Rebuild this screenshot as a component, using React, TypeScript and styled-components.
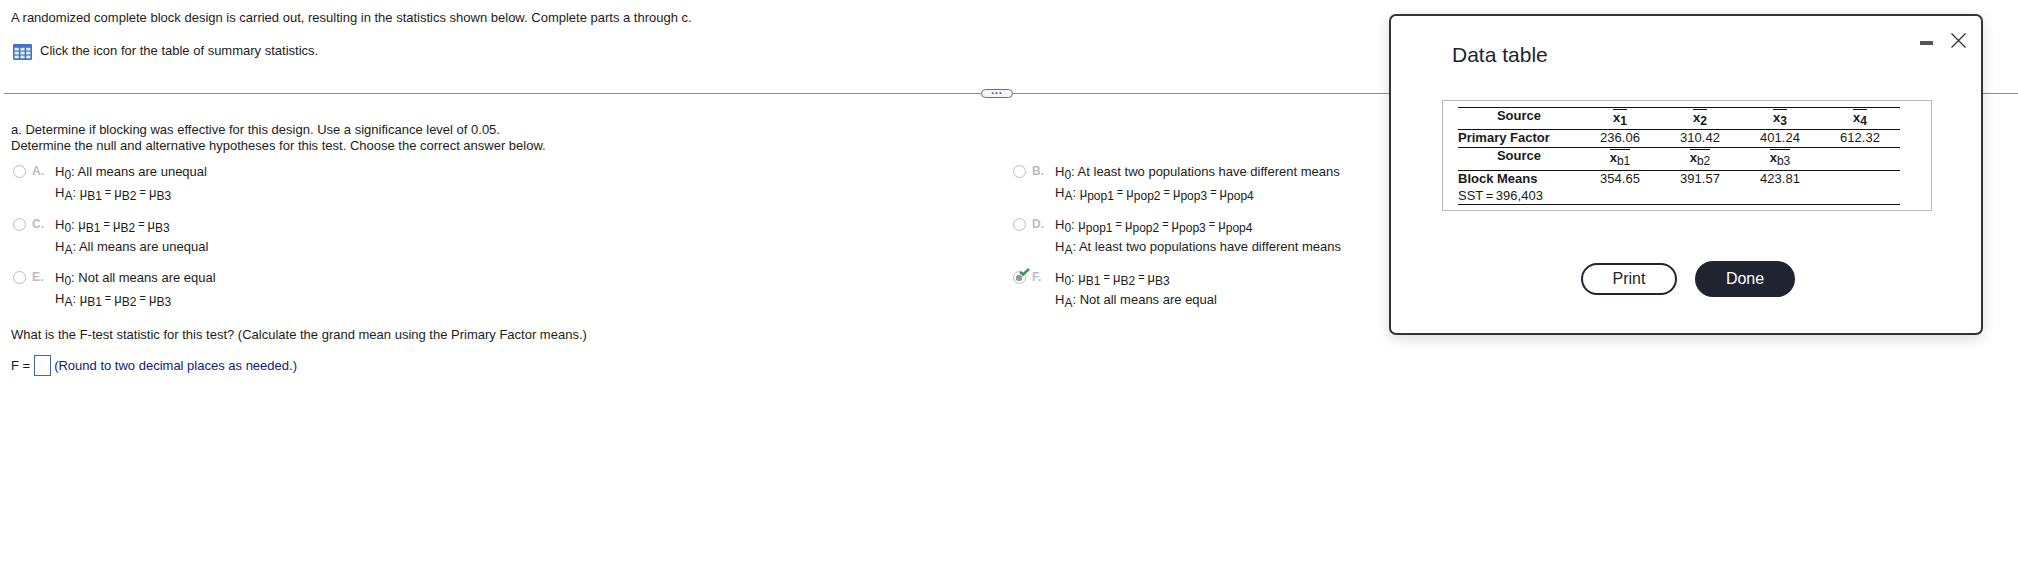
import styled, { createGlobalStyle } from "styled-components";

const GlobalStyle = createGlobalStyle`
  html, body {
    margin: 0;
    background: #fff;
  }
  body {
    font-family: "Liberation Sans", Arial, sans-serif;
    font-size: 13px;
    color: #1c1c1c;
  }
`;

const mu = "\u03BC";

function Mean({ sub }: { sub: string }) {
  return (
    <span>
      {mu}
      <Sub>{sub}</Sub>
    </span>
  );
}

function Means({ names }: { names: string[] }) {
  return (
    <>
      {names.map((name, i) => (
        <span key={name}>
          {i > 0 && <Eq>=</Eq>}
          <Mean sub={name} />
        </span>
      ))}
    </>
  );
}

const blocks = ["B1", "B2", "B3"];
const pops = ["pop1", "pop2", "pop3", "pop4"];

type OptionProps = {
  letter: string;
  h0: React.ReactNode;
  ha: React.ReactNode;
  picked?: boolean;
};

function Option({ letter, h0, ha, picked }: OptionProps) {
  return (
    <OptionRow>
      <Radio $picked={picked}>
        {picked && (
          <Check viewBox="0 0 11 8">
            <path d="M1 4 L4 6.5 L10 1" />
          </Check>
        )}
      </Radio>
      <Letter>{letter}.</Letter>
      <Lines>
        <Line>
          H<Sub>0</Sub>: {h0}
        </Line>
        <Line>
          H<Sub>A</Sub>: {ha}
        </Line>
      </Lines>
    </OptionRow>
  );
}

export default function App() {
  return (
    <>
      <GlobalStyle />
      <Page>
        <Header>
          <p>A randomized complete block design is carried out, resulting in the statistics shown below. Complete parts a through c.</p>
          <IconRow>
            <GridIcon viewBox="0 0 18 15">
              <rect width="18" height="15" rx="1" fill="#3f74c4" />
              {[1.5, 7, 12.5].flatMap((x) =>
                [3.5, 7.2, 10.9].map((y) => (
                  <rect key={`${x}-${y}`} x={x} y={y} width="4" height="2.6" fill="#dfeafa" />
                ))
              )}
            </GridIcon>
            Click the icon for the table of summary statistics.
          </IconRow>
        </Header>

        <Divider>
          <Pill>
            <PillDots>...</PillDots>
          </Pill>
        </Divider>

        <Body>
          <Intro>
            a. Determine if blocking was effective for this design. Use a significance level of 0.05.
            <br />
            Determine the null and alternative hypotheses for this test. Choose the correct answer below.
          </Intro>

          <Options>
            <Option letter="A" h0="All means are unequal" ha={<Means names={blocks} />} />
            <Option letter="B" h0="At least two populations have different means" ha={<Means names={pops} />} />
            <Option letter="C" h0={<Means names={blocks} />} ha="All means are unequal" />
            <Option letter="D" h0={<Means names={pops} />} ha="At least two populations have different means" />
            <Option letter="E" h0="Not all means are equal" ha={<Means names={blocks} />} />
            <Option letter="F" picked h0={<Means names={blocks} />} ha="Not all means are equal" />
          </Options>

          <Question>What is the F-test statistic for this test? (Calculate the grand mean using the Primary Factor means.)</Question>

          <AnswerRow>
            F =<AnswerBox />
            <Hint>(Round to two decimal places as needed.)</Hint>
          </AnswerRow>
        </Body>

        <Dialog>
          <WindowControls>
            <Minimize />
            <CloseIcon viewBox="0 0 15 15">
              <path d="M0.5 0.5 L14.5 14.5 M14.5 0.5 L0.5 14.5" />
            </CloseIcon>
          </WindowControls>
          <Title>Data table</Title>
          <TableFrame>
            <StatsTable>
              <colgroup>
                <col width="122" />
                <col width="80" />
                <col width="80" />
                <col width="80" />
                <col width="80" />
              </colgroup>
              <tbody>
                <Row $h={22}>
                  <HeadCell>Source</HeadCell>
                  {["1", "2", "3", "4"].map((n) => (
                    <SymbolCell key={n}>
                      <Bar>
                        <b>x</b>
                        <BoldSub>{n}</BoldSub>
                      </Bar>
                    </SymbolCell>
                  ))}
                </Row>
                <Row $h={18}>
                  <NameCell>Primary Factor</NameCell>
                  <ValueCell>236.06</ValueCell>
                  <ValueCell>310.42</ValueCell>
                  <ValueCell>401.24</ValueCell>
                  <ValueCell>612.32</ValueCell>
                </Row>
                <Row $h={23}>
                  <HeadCell>Source</HeadCell>
                  {["b1", "b2", "b3"].map((n) => (
                    <SymbolCell key={n}>
                      <Bar>
                        <b>x</b>
                        <Sub>{n}</Sub>
                      </Bar>
                    </SymbolCell>
                  ))}
                  <Cell />
                </Row>
                <Row $h={18} $plain>
                  <BlockCell>Block Means</BlockCell>
                  <BlockValue>354.65</BlockValue>
                  <BlockValue>391.57</BlockValue>
                  <BlockValue>423.81</BlockValue>
                  <Cell />
                </Row>
                <Row $h={16}>
                  <PlainCell colSpan={5}>SST = 396,403</PlainCell>
                </Row>
              </tbody>
            </StatsTable>
          </TableFrame>
          <Buttons>
            <PrintButton>Print</PrintButton>
            <DoneButton>Done</DoneButton>
          </Buttons>
        </Dialog>
      </Page>
    </>
  );
}

const Page = styled.div`
  position: relative;
  width: 2018px;
  height: 573px;
  overflow: hidden;
`;

const Header = styled.header`
  height: 93px;
  padding: 10px 0 0 11px;
  box-sizing: border-box;

  p {
    margin: 0;
    line-height: 16px;
  }
`;

const IconRow = styled.div`
  display: flex;
  align-items: center;
  gap: 8px;
  margin: 15px 0 0 2px;
  line-height: 16px;
`;

const GridIcon = styled.svg`
  width: 19px;
  height: 16px;
  margin-top: 3px;
`;

const Divider = styled.div`
  position: relative;
  height: 1px;
  margin-left: 4px;
  background: #8a8c92;
`;

const Pill = styled.div`
  position: absolute;
  left: 977px;
  top: -4px;
  width: 30px;
  height: 7px;
  border: 1px solid #6e7076;
  border-radius: 5px;
  background: #f4f5f7;
  display: flex;
  justify-content: center;
`;

const PillDots = styled.span`
  font-size: 10px;
  font-weight: 700;
  line-height: 1px;
  letter-spacing: 1px;
  color: #444;
`;

const Body = styled.main`
  padding: 28px 0 0 11px;
`;

const Intro = styled.p`
  margin: 0;
  line-height: 16px;
`;

const Options = styled.div`
  display: grid;
  grid-template-columns: 1000px 1fr;
  grid-auto-rows: 53px;
  margin-top: 10px;
`;

const OptionRow = styled.div`
  display: flex;
  align-items: flex-start;
  padding-left: 2px;
`;

const Radio = styled.span<{ $picked?: boolean }>`
  position: relative;
  flex: none;
  box-sizing: border-box;
  width: 13px;
  height: 13px;
  margin-top: 1px;
  border: 1px solid #bdbdbd;
  border-radius: 50%;
  background: ${(p) => (p.$picked ? "radial-gradient(circle at 45% 55%, #9a9a9a 0 3px, #fff 3.5px)" : "#fff")};
`;

const Check = styled.svg`
  position: absolute;
  left: 5px;
  top: -4px;
  width: 11px;
  height: 8px;
  fill: none;
  stroke: #3c9a4c;
  stroke-width: 2.6;
`;

const Letter = styled.span`
  flex: none;
  width: 23px;
  margin-left: 6px;
  font-size: 12px;
  font-weight: 700;
  line-height: 15px;
  color: #bcbcbc;
`;

const Lines = styled.div`
  display: flex;
  flex-direction: column;
  gap: 6px;
`;

const Line = styled.div`
  line-height: 15px;
  white-space: nowrap;
`;

const Sub = styled.sub`
  font-size: 12px;
  line-height: 0;
  vertical-align: -3px;
`;

const Eq = styled.span`
  margin: 0 3px;
  font-size: 11px;
  position: relative;
  top: -1px;
`;

const Question = styled.p`
  margin: 4px 0 0;
  line-height: 16px;
`;

const AnswerRow = styled.div`
  display: flex;
  align-items: center;
  margin-top: 12px;
`;

const AnswerBox = styled.span`
  width: 15px;
  height: 19px;
  margin: 0 3px 0 4px;
  border: 1px solid #3d68a8;
`;

const Hint = styled.span`
  color: #10207a;
`;

const Dialog = styled.aside`
  position: absolute;
  left: 1389px;
  top: 14px;
  width: 594px;
  height: 321px;
  box-sizing: border-box;
  border: 2px solid #333;
  border-radius: 7px;
  background: #fff;
  box-shadow: 0 4px 14px rgba(0, 0, 0, 0.14);
`;

const WindowControls = styled.div`
  position: absolute;
  right: 15px;
  top: 17px;
  display: flex;
  align-items: center;
  gap: 18px;
`;

const Minimize = styled.span`
  width: 13px;
  height: 4px;
  margin-top: 4px;
  background: #555;
`;

const CloseIcon = styled.svg`
  width: 15px;
  height: 15px;
  fill: none;
  stroke: #333;
  stroke-width: 1.3;
`;

const Title = styled.h2`
  margin: 0;
  padding: 27px 0 0 61px;
  font-size: 21px;
  font-weight: 400;
  line-height: 24px;
  color: #1d2433;
`;

const TableFrame = styled.div`
  width: 490px;
  box-sizing: border-box;
  margin: 33px 0 0 51px;
  padding: 6px 12px 5px 15px;
  border: 1px solid #bbb;
`;

const StatsTable = styled.table`
  width: 442px;
  table-layout: fixed;
  border-collapse: collapse;
  border-top: 1px solid #111;
  border-bottom: 1px solid #111;
  font-size: 13px;
  color: #1a1a1a;
`;

const Row = styled.tr<{ $h: number; $plain?: boolean }>`
  height: ${(p) => p.$h}px;
  border-bottom: ${(p) => (p.$plain ? "none" : "1px solid #111")};
`;

const Cell = styled.td`
  padding: 0;
  text-align: center;
  line-height: 14px;
`;

const HeadCell = styled(Cell)`
  font-weight: 700;
  vertical-align: top;
  padding-top: 1px;
`;

const SymbolCell = styled(Cell)`
  vertical-align: top;
  padding-top: 1px;
`;

const ValueCell = styled(Cell)`
  padding-bottom: 2px;
`;

const NameCell = styled(ValueCell)`
  text-align: left;
  font-weight: 700;
`;

const BlockValue = styled(Cell)`
  vertical-align: top;
  padding-top: 1px;
`;

const BlockCell = styled(BlockValue)`
  text-align: left;
  font-weight: 700;
`;

const PlainCell = styled(Cell)`
  text-align: left;
  word-spacing: -1px;
`;

const Bar = styled.span`
  display: inline-block;
  border-top: 1px solid #111;
  line-height: 16px;
`;

const BoldSub = styled(Sub)`
  font-weight: 700;
`;

const Buttons = styled.div`
  display: flex;
  align-items: center;
  gap: 18px;
  margin: 50px 0 0 190px;
`;

const PrintButton = styled.button`
  width: 96px;
  height: 32px;
  padding: 0;
  border: 2px solid #1f2430;
  border-radius: 16px;
  background: #fff;
  color: #1f2430;
  font-family: inherit;
  font-size: 16px;
`;

const DoneButton = styled.button`
  width: 100px;
  height: 36px;
  padding: 0;
  border: none;
  border-radius: 18px;
  background: #1f2430;
  color: #fff;
  font-family: inherit;
  font-size: 16px;
`;
